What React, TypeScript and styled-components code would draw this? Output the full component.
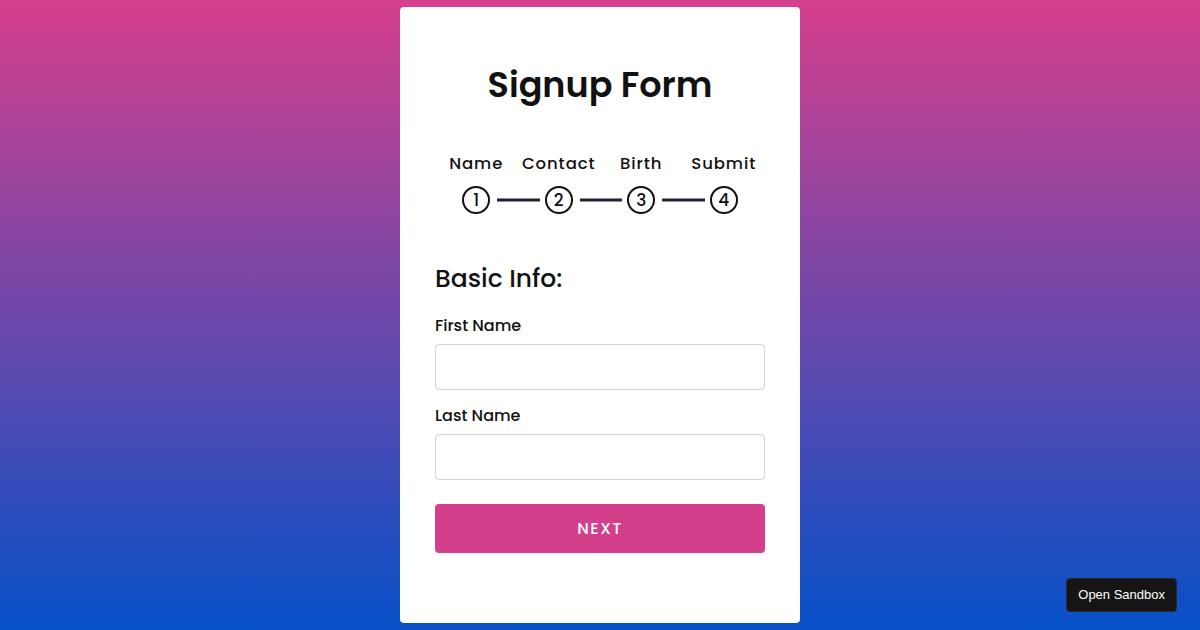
import styled, { createGlobalStyle } from "styled-components";

const GlobalStyle = createGlobalStyle`
    * {
        box-sizing: border-box;
    }

    html,
    body {
        margin: 0;
        padding: 0;
    }

    body {
        font-family: Poppins, "Open Sans", "DejaVu Sans", sans-serif;
        color: #111;
    }
`;

const Page = styled.div`
    min-height: 100vh;
    display: flex;
    justify-content: center;
    align-items: center;
    padding: 7px 0;
    background: linear-gradient(180deg, #d63f8c 0%, #0650c8 100%);
`;

const Card = styled.form`
    width: 400px;
    height: 616px;
    padding: 51px 35px 0;
    border-radius: 4px;
    background: #fff;
`;

const Title = styled.h1`
    margin: 0;
    font-size: 35px;
    font-weight: 600;
    line-height: 54px;
    text-align: center;
`;

const Steps = styled.div`
    margin-top: 40px;
    display: grid;
    grid-template-columns: repeat(4, 1fr);
    row-gap: 10px;
`;

const StepLabel = styled.span`
    font-size: 16.5px;
    font-weight: 500;
    line-height: 24px;
    letter-spacing: 0.9px;
    text-align: center;
`;

const StepCell = styled.div<{ $connected: boolean }>`
    position: relative;
    display: flex;
    justify-content: center;

    &::after {
        display: ${props => (props.$connected ? "block" : "none")};
        content: "";
        position: absolute;
        top: 50%;
        left: calc(50% + 21px);
        right: calc(-50% + 19px);
        height: 3px;
        transform: translateY(-50%);
        background-color: #1f2033;
    }
`;

const StepNumber = styled.span`
    width: 28px;
    height: 28px;
    display: flex;
    justify-content: center;
    align-items: center;
    border: 2px solid #111;
    border-radius: 50%;
    font-size: 17px;
    font-weight: 500;
    line-height: 1;
`;

const SectionTitle = styled.h2`
    margin: 47px 0 0;
    font-size: 25px;
    font-weight: 500;
    line-height: 36px;
`;

const Field = styled.label`
    display: block;
    margin-top: 17px;

    & + & {
        margin-top: 14px;
    }
`;

const FieldName = styled.span`
    display: block;
    font-size: 16px;
    font-weight: 500;
    line-height: 24px;
`;

const Input = styled.input`
    width: 100%;
    height: 46px;
    margin-top: 6px;
    display: block;
    padding: 0 12px;
    border: 1px solid #d2d2d2;
    border-radius: 4px;
    font: inherit;
    outline: none;
`;

const NextButton = styled.button`
    width: 100%;
    height: 49px;
    margin-top: 24px;
    display: block;
    border: none;
    border-radius: 4px;
    background-color: #d33f8b;
    color: #fff;
    font-family: inherit;
    font-size: 16px;
    font-weight: 500;
    letter-spacing: 1.5px;
    cursor: pointer;
`;

const SandboxLink = styled.a`
    position: fixed;
    right: 23px;
    bottom: 18px;
    padding: 8px 11px;
    border: 1px solid #2a2a2a;
    border-radius: 4px;
    background-color: #151515;
    color: #fff;
    font-family: "Liberation Sans", Arial, sans-serif;
    font-size: 13px;
    line-height: 16px;
    text-decoration: none;
`;

const steps = ["Name", "Contact", "Birth", "Submit"];

const App = () => {
    return (
        <>
            <GlobalStyle />
            <Page>
                <Card onSubmit={e => e.preventDefault()}>
                    <Title>Signup Form</Title>
                    <Steps>
                        {steps.map(step => (
                            <StepLabel key={step}>{step}</StepLabel>
                        ))}
                        {steps.map((step, index) => (
                            <StepCell key={step} $connected={index < steps.length - 1}>
                                <StepNumber>{index + 1}</StepNumber>
                            </StepCell>
                        ))}
                    </Steps>
                    <SectionTitle>Basic Info:</SectionTitle>
                    <Field>
                        <FieldName>First Name</FieldName>
                        <Input type="text" />
                    </Field>
                    <Field>
                        <FieldName>Last Name</FieldName>
                        <Input type="text" />
                    </Field>
                    <NextButton type="submit">NEXT</NextButton>
                </Card>
            </Page>
            <SandboxLink href="#">Open Sandbox</SandboxLink>
        </>
    );
}

export default App;
